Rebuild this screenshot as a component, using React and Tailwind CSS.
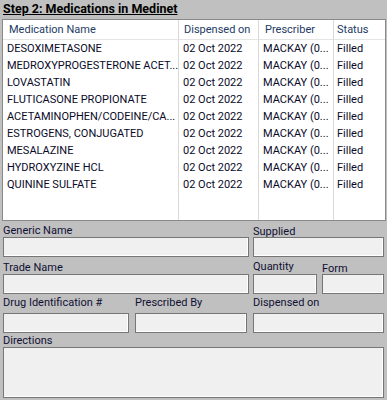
import React from 'react'

const meds = [
  'DESOXIMETASONE',
  'MEDROXYPROGESTERONE ACET...',
  'LOVASTATIN',
  'FLUTICASONE PROPIONATE',
  'ACETAMINOPHEN/CODEINE/CA...',
  'ESTROGENS, CONJUGATED',
  'MESALAZINE',
  'HYDROXYZINE HCL',
  'QUININE SULFATE',
]

const columns = [
  { title: 'Medication Name', width: 'w-[176px]', head: 'pl-[6px]', cell: 'pl-[4px]', value: (m) => m },
  { title: 'Dispensed on', width: 'w-[80px]', head: 'pl-[5px]', cell: 'pl-[4px]', value: () => '02 Oct 2022' },
  { title: 'Prescriber', width: 'w-[75px]', head: 'pl-[6px]', cell: 'pl-[4px]', value: () => 'MACKAY (0...' },
  { title: 'Status', width: 'flex-1', head: 'pl-[3px]', cell: 'pl-[3px]', value: () => 'Filled' },
]

function Box({ className = '' }) {
  return (
    <div className={`h-[20px] bg-[#f0f0f0] border border-[#767676] shadow-[inset_-1px_-1px_0_#ffffff] ${className}`} />
  )
}

function Label({ children, className = '' }) {
  return <div className={`h-[13px] leading-[13px] text-[#101035] whitespace-nowrap ${className}`}>{children}</div>
}

export default function App() {
  return (
    <div
      className="w-[387px] h-[400px] bg-[#c0c0c0] overflow-hidden text-[11px]"
      style={{ fontFamily: 'Roboto, "Liberation Sans", sans-serif' }}
    >
      {/* Titulo */}
      <div className="px-[3px] pt-[2px] h-[19px] leading-[14px] text-[12.5px] font-bold underline text-black">
        Step 2: Medications in Medinet
      </div>

      {/* Lista de medicamentos */}
      <div className="mx-[2px] w-[384px] h-[202px] bg-white border border-[#8a8a8a] flex">
        {columns.map((col, i) => (
          <div key={i} className={`${col.width} h-full border-r border-[#d9d9d9] last:border-r-0 overflow-hidden`}>
            <div className={`h-[20px] leading-[20px] border-b border-[#e5e5e5] text-[#243a64] whitespace-nowrap ${col.head}`}>
              {col.title}
            </div>
            {meds.map((m) => (
              <div key={m} className={`h-[17px] leading-[17px] text-[#0a0a28] whitespace-nowrap ${col.cell}`}>
                {col.value(m)}
              </div>
            ))}
          </div>
        ))}
      </div>

      {/* Campos */}
      <div className="px-[3px] pt-[3px]">
        <div className="flex">
          <div className="w-[246px]">
            <Label>Generic Name</Label>
            <Box />
          </div>
          <div className="ml-[4px] w-[131px]">
            <Label className="pt-[1px]">Supplied</Label>
            <Box />
          </div>
        </div>

        <div className="flex mt-[4px]">
          <div className="w-[246px]">
            <Label>Trade Name</Label>
            <Box />
          </div>
          <div className="ml-[4px] w-[64px]">
            <Label className="-mt-[1px] h-[13px]">Quantity</Label>
            <Box className="mt-[1px]" />
          </div>
          <div className="ml-[5px] w-[62px]">
            <Label className="pt-[1px]">Form</Label>
            <Box />
          </div>
        </div>

        <div className="flex mt-[2px]">
          <div className="w-[126px]">
            <Label className="h-[17px]">Drug Identification #</Label>
            <Box />
          </div>
          <div className="ml-[6px] w-[112px]">
            <Label className="h-[17px]">Prescribed By</Label>
            <Box />
          </div>
          <div className="ml-[6px] w-[131px]">
            <Label className="h-[17px]">Dispensed on</Label>
            <Box />
          </div>
        </div>

        <Label className="mt-[1px]">Directions</Label>
        <div className="w-[381px] h-[51px] bg-[#f0f0f0] border border-[#767676] shadow-[inset_-1px_-1px_0_#ffffff]" />
      </div>
    </div>
  )
}
